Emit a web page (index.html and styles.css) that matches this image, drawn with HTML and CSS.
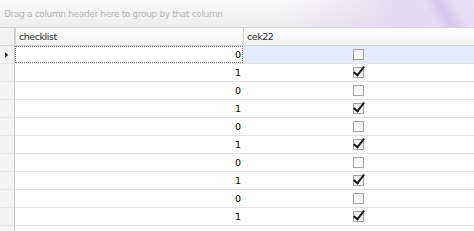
FILE: index.html
```html
<!DOCTYPE html>
<html lang="en">
<head>
    <meta charset="UTF-8">
    <title>Grid</title>
    <link rel="stylesheet" href="styles.css">
</head>
<body>
    <div class="grid">
        <div class="group-panel">
            <span class="group-text">Drag a column header here to group by that column</span>
        </div>

        <div class="header">
            <div class="indicator"></div>
            <div class="head-cell">checklist</div>
            <div class="head-cell">cek22</div>
        </div>

        <div class="row focused">
            <div class="indicator"><span class="arrow"></span></div>
            <div class="cell num"><span class="focus-rect">0</span></div>
            <div class="cell check selected"><span class="box"></span></div>
        </div>
        <div class="row">
            <div class="indicator"></div>
            <div class="cell num">1</div>
            <div class="cell check"><span class="box checked"></span></div>
        </div>
        <div class="row">
            <div class="indicator"></div>
            <div class="cell num">0</div>
            <div class="cell check"><span class="box"></span></div>
        </div>
        <div class="row">
            <div class="indicator"></div>
            <div class="cell num">1</div>
            <div class="cell check"><span class="box checked"></span></div>
        </div>
        <div class="row">
            <div class="indicator"></div>
            <div class="cell num">0</div>
            <div class="cell check"><span class="box"></span></div>
        </div>
        <div class="row">
            <div class="indicator"></div>
            <div class="cell num">1</div>
            <div class="cell check"><span class="box checked"></span></div>
        </div>
        <div class="row">
            <div class="indicator"></div>
            <div class="cell num">0</div>
            <div class="cell check"><span class="box"></span></div>
        </div>
        <div class="row">
            <div class="indicator"></div>
            <div class="cell num">1</div>
            <div class="cell check"><span class="box checked"></span></div>
        </div>
        <div class="row">
            <div class="indicator"></div>
            <div class="cell num">0</div>
            <div class="cell check"><span class="box"></span></div>
        </div>
        <div class="row">
            <div class="indicator"></div>
            <div class="cell num">1</div>
            <div class="cell check"><span class="box checked"></span></div>
        </div>
        <div class="row filler">
            <div class="indicator"></div>
            <div></div>
            <div></div>
        </div>
    </div>
</body>
</html>
```

FILE: styles.css
```css
body {
    margin: 0;
    font-family: "DejaVu Sans", Verdana, sans-serif;
    font-size: 10px;
    color: #111;
    background: #fff;
}
.grid {
    width: 474px;
    height: 231px;
    overflow: hidden;
}
.group-panel {
    height: 28px;
    box-sizing: border-box;
    border-bottom: 1px solid #d6d6d6;
    display: flex;
    align-items: center;
    padding-left: 4px;
    background:
        linear-gradient(58deg, transparent 0, transparent 372px, rgba(196, 172, 228, 0.45) 384px, rgba(230, 220, 244, 0.2) 398px, transparent 410px, transparent 418px, rgba(186, 160, 224, 0.55) 432px, rgba(214, 198, 238, 0.35) 452px, rgba(236, 228, 248, 0.2) 470px),
        linear-gradient(90deg, rgba(255, 255, 255, 0) 0, rgba(255, 255, 255, 0) 280px, rgba(224, 210, 242, 0.8) 400px, rgba(228, 216, 244, 0.8) 474px),
        linear-gradient(#fbfbfb, #ededed);
}
.group-text {
    color: #b6b6b6;
    font-size: 9px;
    letter-spacing: -0.35px;
}
.header,
.row {
    display: grid;
    grid-template-columns: 15px 228px 1fr;
}
.header {
    height: 18px;
    box-sizing: border-box;
    border-bottom: 1px solid #d2d2d2;
    background: linear-gradient(#ffffff, #f3f3f3);
}
.head-cell {
    display: flex;
    align-items: center;
    padding-left: 3px;
    border-left: 1px solid #d4d4d4;
    font-size: 9.5px;
    color: #2a2a2a;
    letter-spacing: -0.45px;
}
.indicator {
    background: #f3f3f3;
    border-right: 1px solid #c9c9c9;
    display: flex;
    align-items: center;
    justify-content: center;
}
.row {
    height: 18px;
    box-sizing: border-box;
    border-bottom: 1px solid #e2e2e2;
}
.row .indicator {
    border-bottom: 1px solid #e6e6e6;
    margin-bottom: -1px;
}
.filler {
    border-bottom: none;
}
.arrow {
    width: 0;
    height: 0;
    border-top: 3px solid transparent;
    border-bottom: 3px solid transparent;
    border-left: 3px solid #111;
    margin-left: -2px;
}
.cell {
    display: flex;
    align-items: center;
}
.num {
    justify-content: flex-end;
    padding-right: 2px;
    font-size: 9.5px;
    color: #000;
}
.focused .num {
    padding: 0;
}
.focus-rect {
    flex: 1;
    align-self: stretch;
    display: flex;
    align-items: center;
    justify-content: flex-end;
    padding-right: 1px;
    border: 1px dotted #6a6a6a;
}
.check {
    justify-content: center;
    padding-right: 1px;
}
.selected {
    background: #e3ebfa;
}
.box {
    position: relative;
    width: 9px;
    height: 9px;
    border: 1px solid #a4a4a4;
    background: linear-gradient(#f0f0f0, #ffffff);
    box-sizing: content-box;
}
.box.checked::after {
    content: "";
    position: absolute;
    left: 2px;
    top: -4px;
    width: 4px;
    height: 10px;
    border-right: 2px solid #151515;
    border-bottom: 2px solid #151515;
    transform: rotate(38deg);
}
```
